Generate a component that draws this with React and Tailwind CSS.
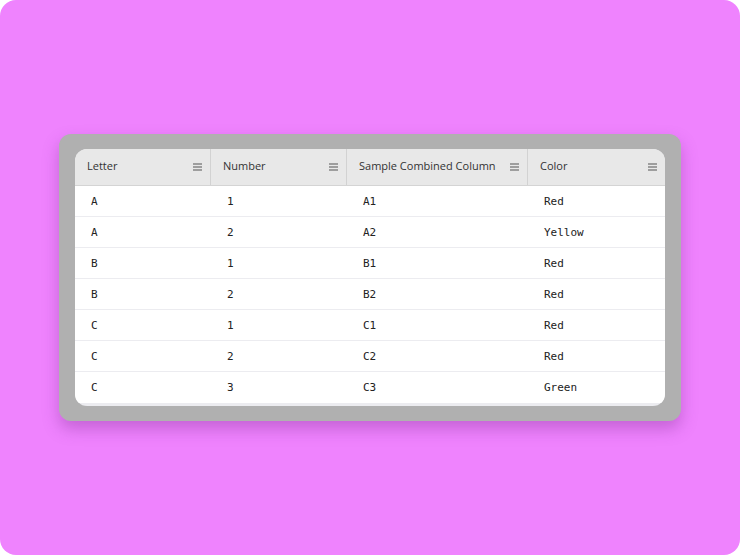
import React from "react";

const columns = [
  { key: "letter", label: "Letter", w: "w-[136px]" },
  { key: "number", label: "Number", w: "w-[136px]" },
  { key: "combined", label: "Sample Combined Column", w: "w-[181px]" },
  { key: "color", label: "Color", w: "w-[137px]" },
];

const rows = [
  ["A", "1", "Red"],
  ["A", "2", "Yellow"],
  ["B", "1", "Red"],
  ["B", "2", "Red"],
  ["C", "1", "Red"],
  ["C", "2", "Red"],
  ["C", "3", "Green"],
].map(([letter, number, color]) => ({ letter, number, combined: letter + number, color }));

function MenuIcon() {
  return (
    <svg width="9" height="8" viewBox="0 0 9 8" className="shrink-0">
      <path d="M0 1h9M0 4h9M0 7h9" stroke="#555" strokeWidth="1.2" />
    </svg>
  );
}

export default function App() {
  return (
    <div className="w-[740px] h-[555px] bg-white">
      <div className="w-full h-full rounded-[16px] bg-[#ef83fe] flex items-center justify-center">
        <div className="w-[622px] rounded-[12px] bg-[#b0b0b0] px-4 pt-[15px] pb-[15px] mb-[1px] shadow-[0_8px_16px_rgba(120,40,140,0.35)]">
          <div className="rounded-[12px] overflow-hidden bg-[#ececf0] pb-[3px]">
            <div className="flex h-[37px] bg-[#e8e8e8] border-b border-[#d4d4d4]">
              {columns.map((c) => (
                <div
                  key={c.key}
                  className={`${c.w} flex items-center justify-between pl-3 pr-[8px] border-r border-[#d2d2d2] last:border-r-0 text-[11px] text-[#333]`}
                  style={{ fontFamily: "'Open Sans', 'Liberation Sans', sans-serif" }}
                >
                  <span>{c.label}</span>
                  <MenuIcon />
                </div>
              ))}
            </div>
            {rows.map((r, i) => (
              <div key={i} className="flex h-[31px] bg-white border-b border-[#ececf0] last:border-b-0">
                {columns.map((c) => (
                  <div
                    key={c.key}
                    className={`${c.w} flex items-center pl-4 pt-[3px] text-[11px] text-[#222]`}
                    style={{ fontFamily: "'DejaVu Sans Mono', monospace" }}
                  >
                    {r[c.key]}
                  </div>
                ))}
              </div>
            ))}
          </div>
        </div>
      </div>
    </div>
  );
}
